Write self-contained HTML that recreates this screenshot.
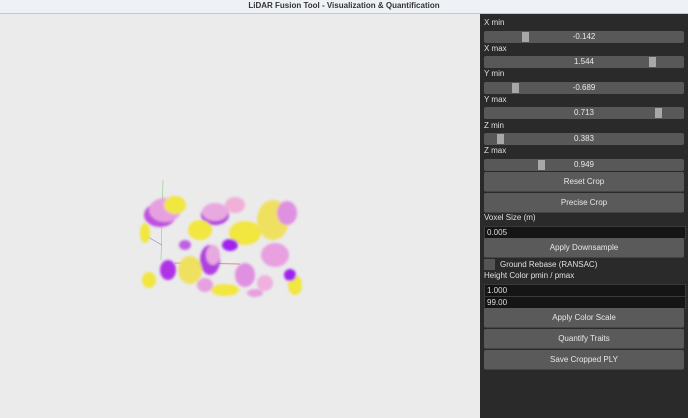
<!DOCTYPE html>
<html><head><style>
body{margin:0;width:688px;height:418px;overflow:hidden;background:#ebebeb;font-family:"Liberation Sans",sans-serif;position:relative}
#title{position:absolute;left:0;top:0;width:688px;height:13px;background:#eef2f7;border-bottom:1px solid #c8c8c8;font-size:8px;font-weight:bold;color:#333;text-align:center;line-height:12px}
#panel{position:absolute;left:480px;top:14px;width:208px;height:404px;background:#2a2a2a;color:#ddd;font-size:8px}
.lbl{position:absolute;left:4px;color:#e0e0e0}
.sl{position:absolute;left:4px;width:200px;height:12px;background:#585858;border-radius:2px;text-align:center;line-height:12px;color:#e8e8e8}
.h{position:absolute;top:1px;width:7px;height:10px;background:#a8a8a8}
.btn{position:absolute;left:4px;width:200px;height:19px;background:#5a5a5a;border-radius:2px;text-align:center;line-height:19px;color:#e8e8e8;border-bottom:1px solid #444}
.in{position:absolute;left:4px;width:198px;height:11px;background:#151515;border:1px solid #3a3a3a;line-height:11px;padding-left:2px;color:#ddd}
</style></head><body>
<div id="title">LiDAR Fusion Tool - Visualization &amp; Quantification</div>
<svg style="position:absolute;left:135px;top:175px" width="175" height="130">
<defs><filter id="b"><feGaussianBlur stdDeviation="1.2"/></filter></defs>
<line x1="28" y1="5" x2="26" y2="85" stroke="#8c8" stroke-width="0.6"/>
<line x1="11" y1="61" x2="27" y2="70" stroke="#88c" stroke-width="0.7"/>
<line x1="40" y1="88" x2="105" y2="89" stroke="#e66" stroke-width="0.7"/>
<g filter="url(#b)">
<ellipse cx="25" cy="40" rx="16" ry="12" fill="#c050e0"/>
<ellipse cx="30" cy="35" rx="16" ry="12" fill="#e6a0e0"/>
<ellipse cx="40" cy="30" rx="11" ry="9" fill="#f2e640"/>
<ellipse cx="80" cy="40" rx="14" ry="10" fill="#b040e0"/>
<ellipse cx="80" cy="37" rx="13" ry="9" fill="#e8a8e0"/>
<ellipse cx="100" cy="30" rx="10" ry="8" fill="#f0b0d8"/>
<ellipse cx="65" cy="55" rx="12" ry="10" fill="#f2e640"/>
<ellipse cx="110" cy="58" rx="16" ry="12" fill="#f2e640"/>
<ellipse cx="138" cy="45" rx="16" ry="20" fill="#f0e060"/>
<ellipse cx="152" cy="38" rx="10" ry="12" fill="#e090e0"/>
<ellipse cx="10" cy="58" rx="5" ry="10" fill="#f2e640"/>
<ellipse cx="75" cy="85" rx="10" ry="15" fill="#b040e0"/>
<ellipse cx="78" cy="80" rx="7" ry="10" fill="#e8a8e0"/>
<ellipse cx="55" cy="95" rx="12" ry="14" fill="#f0e060"/>
<ellipse cx="33" cy="95" rx="8" ry="10" fill="#b030e8"/>
<ellipse cx="110" cy="100" rx="10" ry="12" fill="#e090e0"/>
<ellipse cx="90" cy="115" rx="14" ry="6" fill="#f2e640"/>
<ellipse cx="140" cy="80" rx="14" ry="12" fill="#e8a0e0"/>
<ellipse cx="160" cy="110" rx="7" ry="10" fill="#f2e640"/>
<ellipse cx="130" cy="108" rx="8" ry="8" fill="#f0b0e0"/>
<ellipse cx="14" cy="105" rx="7" ry="8" fill="#f2e640"/>
<ellipse cx="70" cy="110" rx="8" ry="7" fill="#e6a0e0"/>
<ellipse cx="155" cy="100" rx="6" ry="6" fill="#a020f0"/>
<ellipse cx="120" cy="118" rx="8" ry="4" fill="#e6a0e0"/>
<ellipse cx="95" cy="70" rx="8" ry="6" fill="#a020f0"/>
<ellipse cx="50" cy="70" rx="6" ry="5" fill="#c060e0"/>
</g></svg>
<div id="panel">
<div class="lbl" style="top:4px">X min</div>
<div class="sl" style="top:17px">-0.142<div class="h" style="left:38px"></div></div>
<div class="lbl" style="top:30px">X max</div>
<div class="sl" style="top:42px">1.544<div class="h" style="left:165px"></div></div>
<div class="lbl" style="top:55px">Y min</div>
<div class="sl" style="top:68px">-0.689<div class="h" style="left:28px"></div></div>
<div class="lbl" style="top:81px">Y max</div>
<div class="sl" style="top:93px">0.713<div class="h" style="left:171px"></div></div>
<div class="lbl" style="top:107px">Z min</div>
<div class="sl" style="top:119px">0.383<div class="h" style="left:13px"></div></div>
<div class="lbl" style="top:132px">Z max</div>
<div class="sl" style="top:145px">0.949<div class="h" style="left:54px"></div></div>
<div class="btn" style="top:158px">Reset Crop</div>
<div class="btn" style="top:179px">Precise Crop</div>
<div class="lbl" style="top:199px">Voxel Size (m)</div>
<div class="in" style="top:212px">0.005</div>
<div class="btn" style="top:224px">Apply Downsample</div>
<div style="position:absolute;left:4px;top:245px;width:11px;height:11px;background:#555"></div>
<div class="lbl" style="left:20px;top:246px">Ground Rebase (RANSAC)</div>
<div class="lbl" style="top:257px">Height Color pmin / pmax</div>
<div class="in" style="top:270px">1.000</div>
<div class="in" style="top:282px">99.00</div>
<div class="btn" style="top:294px">Apply Color Scale</div>
<div class="btn" style="top:315px">Quantify Traits</div>
<div class="btn" style="top:336px">Save Cropped PLY</div>
</div>
</body></html>
